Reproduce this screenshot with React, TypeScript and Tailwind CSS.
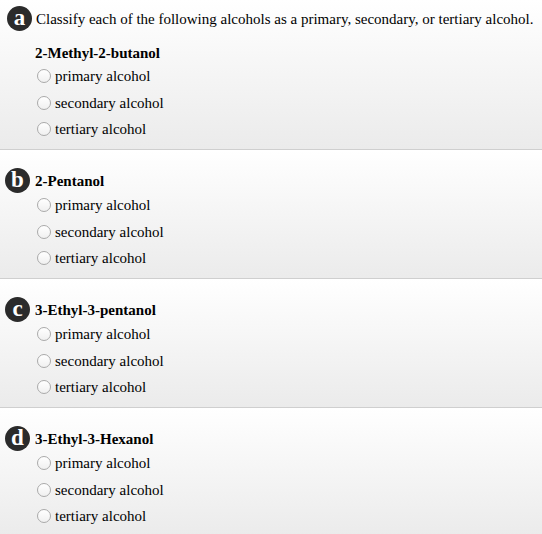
import React from 'react';

const OPTIONS = ['primary alcohol', 'secondary alcohol', 'tertiary alcohol'];

const Badge: React.FC<{ letter: string; className?: string }> = ({ letter, className = '' }) => (
  <div
    className={`w-[25px] h-[25px] rounded-full bg-[#2b2b2b] text-white flex items-center justify-center shrink-0 font-bold text-[23px] leading-none pb-[2px] ${className}`}
  >
    {letter}
  </div>
);

const Options: React.FC = () => (
  <div className="pl-[37px]">
    {OPTIONS.map((o) => (
      <label key={o} className="h-[26.5px] flex items-center gap-[4px] cursor-pointer">
        <span className="w-[14px] h-[14px] rounded-full border border-[#aaaaaa] bg-gradient-to-b from-white to-[#f0f0f0] shrink-0" />
        <span className="text-[15px] text-black">{o}</span>
      </label>
    ))}
  </div>
);

const Part: React.FC<{ letter: string; name: string }> = ({ letter, name }) => (
  <section className="bg-gradient-to-b from-white to-[#ebebeb] border-b border-[#cfcfcf] pt-[18px] pb-[6.5px]">
    <div className="h-[24px] flex items-center pl-[5px] gap-[5px]">
      <Badge letter={letter} />
      <h3 className="text-[15px] font-bold text-black pt-[3px]">{name}</h3>
    </div>
    <Options />
  </section>
);

export default function App() {
  return (
    <div className="w-[542px] bg-white font-['Liberation_Serif','Times_New_Roman',serif]">
      <section className="bg-gradient-to-b from-white to-[#ebebeb] border-b border-[#cfcfcf] pt-[6px] pb-[6.5px]">
        <div className="h-[24px] flex items-center pl-[7px] gap-[4px]">
          <Badge letter="a" className="w-[24px] h-[24px]" />
          <p className="text-[15px] text-black pt-[3px]">
            Classify each of the following alcohols as a primary, secondary, or tertiary alcohol.
          </p>
        </div>
        <h3 className="mt-[13px] h-[20px] flex items-center pl-[35px] text-[15px] font-bold text-black">
          2-Methyl-2-butanol
        </h3>
        <Options />
      </section>
      <Part letter="b" name="2-Pentanol" />
      <Part letter="c" name="3-Ethyl-3-pentanol" />
      <Part letter="d" name="3-Ethyl-3-Hexanol" />
    </div>
  );
}
